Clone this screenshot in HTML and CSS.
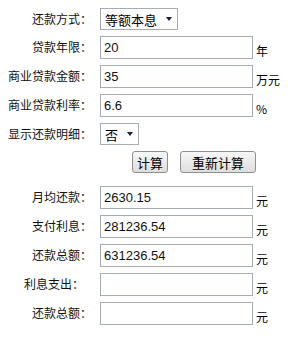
FILE: index.html
```html
<!DOCTYPE html>
<html lang="zh-CN">
<head>
  <meta charset="UTF-8">
  <title>房贷计算器</title>
  <link rel="stylesheet" href="styles.css">
</head>
<body>
  <div class="calc">
    <div class="row row-sel">
      <span class="label">还款方式：</span>
      <div class="select sel-wide"><span>等额本息</span><i class="arrow"></i></div>
    </div>
    <div class="row">
      <span class="label">贷款年限：</span>
      <div class="input">20</div>
      <span class="unit">年</span>
    </div>
    <div class="row">
      <span class="label">商业贷款金额：</span>
      <div class="input">35</div>
      <span class="unit">万元</span>
    </div>
    <div class="row">
      <span class="label">商业贷款利率：</span>
      <div class="input">6.6</div>
      <span class="unit">%</span>
    </div>
    <div class="row row-sel">
      <span class="label">显示还款明细：</span>
      <div class="select sel-small"><span>否</span><i class="arrow"></i></div>
    </div>
    <div class="buttons">
      <button class="btn btn-calc">计算</button>
      <button class="btn btn-reset">重新计算</button>
    </div>
    <div class="row">
      <span class="label">月均还款：</span>
      <div class="input">2630.15</div>
      <span class="unit">元</span>
    </div>
    <div class="row">
      <span class="label">支付利息：</span>
      <div class="input">281236.54</div>
      <span class="unit">元</span>
    </div>
    <div class="row">
      <span class="label">还款总额：</span>
      <div class="input">631236.54</div>
      <span class="unit">元</span>
    </div>
    <div class="row">
      <span class="label shift">利息支出：</span>
      <div class="input"></div>
      <span class="unit">元</span>
    </div>
    <div class="row">
      <span class="label">还款总额：</span>
      <div class="input"></div>
      <span class="unit">元</span>
    </div>
  </div>
</body>
</html>
```

FILE: styles.css
```css
body {
  margin: 0;
  padding: 0;
  background-color: #fff;
  font-family: "Noto Sans CJK SC", "Liberation Sans", sans-serif;
  font-size: 12px;
  color: #000;
}

.calc {
  padding-top: 8px;
  display: flex;
  flex-direction: column;
  gap: 6px;
}

.row {
  display: flex;
  align-items: stretch;
  height: 23px;
}

.row-sel {
  height: 22px;
}

.label {
  width: 92px;
  text-align: right;
  line-height: 22px;
  margin-right: 8px;
  color: #111;
}

.label.shift {
  width: 84px;
  margin-right: 16px;
}

.input {
  width: 153px;
  box-sizing: border-box;
  border: 1px solid #a5acb2;
  background-color: #fff;
  padding: 0 3px;
  font-family: "Liberation Sans", Arial, sans-serif;
  font-size: 13px;
  line-height: 21px;
  color: #111;
}

.unit {
  margin-left: 3px;
  padding-top: 6px;
  line-height: 18px;
  font-size: 12px;
}

.select {
  box-sizing: border-box;
  border: 1px solid #a5acb2;
  display: flex;
  align-items: center;
  padding-left: 4px;
  font-size: 13px;
}

.sel-wide {
  width: 78px;
}

.sel-small {
  width: 39px;
}

.select span {
  flex: 1;
}

.arrow {
  width: 0;
  height: 0;
  border-left: 3px solid transparent;
  border-right: 3px solid transparent;
  border-top: 4px solid #1b1f3b;
  margin-right: 5px;
}

.buttons {
  display: flex;
  height: 22px;
  padding-left: 132px;
  gap: 12px;
  margin-bottom: 7px;
}

.btn {
  box-sizing: border-box;
  height: 22px;
  padding: 0;
  border: 1px solid #8f8f8f;
  border-radius: 3px;
  background: linear-gradient(#f7f7f7, #dedede);
  font-family: "Noto Sans CJK SC", sans-serif;
  font-size: 13px;
  color: #000;
}

.btn-calc {
  width: 36px;
}

.btn-reset {
  width: 76px;
}
```
